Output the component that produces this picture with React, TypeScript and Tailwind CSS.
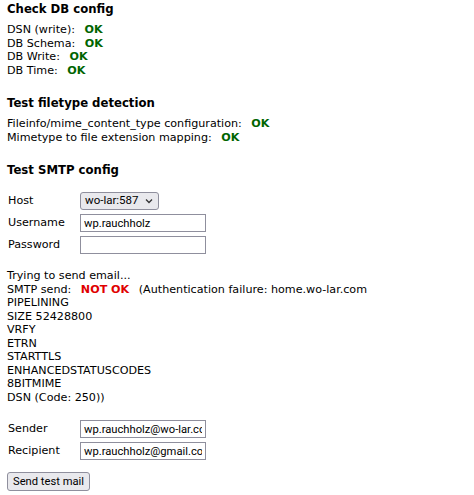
const font = { fontFamily: '"DejaVu Sans", Verdana, sans-serif' };
const ctrlFont = { fontFamily: 'Roboto, "Noto Sans", sans-serif' };

function Ok() {
  return <span className="font-bold text-[#006400] ml-[6px]">OK</span>;
}

function Row({ label, children }: { label: string; children: React.ReactNode }) {
  return (
    <tr>
      <td className="px-[2px] py-[2px] w-[72px] align-middle">{label}</td>
      <td className="px-[2px] py-[2px] align-middle">{children}</td>
    </tr>
  );
}

function TextBox({ value }: { value: string }) {
  return (
    <input
      type="text"
      defaultValue={value}
      style={ctrlFont}
      className="block w-[126px] h-[18px] border border-[#8f8f9d] bg-white px-[3px] text-[11.2px] text-black outline-none"
    />
  );
}

export default function App() {
  return (
    <div className="bg-white text-black text-[11.15px] leading-[13.5px] px-[7px] w-[474px] h-[495px] overflow-hidden" style={font}>
      <h3 className="text-[11.7px] font-bold leading-[16px] pt-[1px] mb-[6px]">Check DB config</h3>
      <div>DSN (write): <Ok /></div>
      <div>DB Schema: <Ok /></div>
      <div>DB Write: <Ok /></div>
      <div>DB Time: <Ok /></div>

      <h3 className="text-[11.7px] font-bold leading-[16px] mt-[18px] mb-[6px]">Test filetype detection</h3>
      <div>Fileinfo/mime_content_type configuration: <Ok /></div>
      <div>Mimetype to file extension mapping: <Ok /></div>

      <h3 className="text-[11.7px] font-bold leading-[16px] mt-[18px] mb-[12px]">Test SMTP config</h3>
      <table className="border-separate border-spacing-0 -ml-[1px]">
        <tbody>
          <Row label="Host">
            <div
              style={ctrlFont}
              className="inline-flex items-center gap-[6px] h-[18px] border border-[#8f8f9d] rounded-[3px] bg-[#e9e9ed] pl-[4px] pr-[5px] text-[11.5px] align-middle"
            >
              <span>wo-lar:587</span>
              <svg width="8" height="6" viewBox="0 0 8 6">
                <path d="M1 1.5 L4 4.5 L7 1.5" fill="none" stroke="#333" strokeWidth="1.3" />
              </svg>
            </div>
          </Row>
          <Row label="Username">
            <TextBox value="wp.rauchholz" />
          </Row>
          <Row label="Password">
            <input type="password" className="block w-[126px] h-[18px] border border-[#8f8f9d] bg-white px-[3px] outline-none" />
          </Row>
        </tbody>
      </table>

      <div className="mt-[13px]">
        <div>Trying to send email...</div>
        <div>
          SMTP send: <span className="font-bold text-[#e00000] ml-[6px] mr-[6px]">NOT OK</span> (Authentication failure: home.wo-lar.com
        </div>
        <div>PIPELINING</div>
        <div>SIZE 52428800</div>
        <div>VRFY</div>
        <div>ETRN</div>
        <div>STARTTLS</div>
        <div>ENHANCEDSTATUSCODES</div>
        <div>8BITMIME</div>
        <div>DSN (Code: 250))</div>
      </div>

      <table className="border-separate border-spacing-0 -ml-[1px] mt-[14px]">
        <tbody>
          <Row label="Sender">
            <TextBox value="wp.rauchholz@wo-lar.com" />
          </Row>
          <Row label="Recipient">
            <TextBox value="wp.rauchholz@gmail.com" />
          </Row>
        </tbody>
      </table>

      <button
        style={ctrlFont}
        className="mt-[10px] h-[19px] px-[5px] border border-[#8f8f9d] rounded-[3px] bg-[#e9e9ed] text-[11.2px] leading-[17px]"
      >
        Send test mail
      </button>
    </div>
  );
}
